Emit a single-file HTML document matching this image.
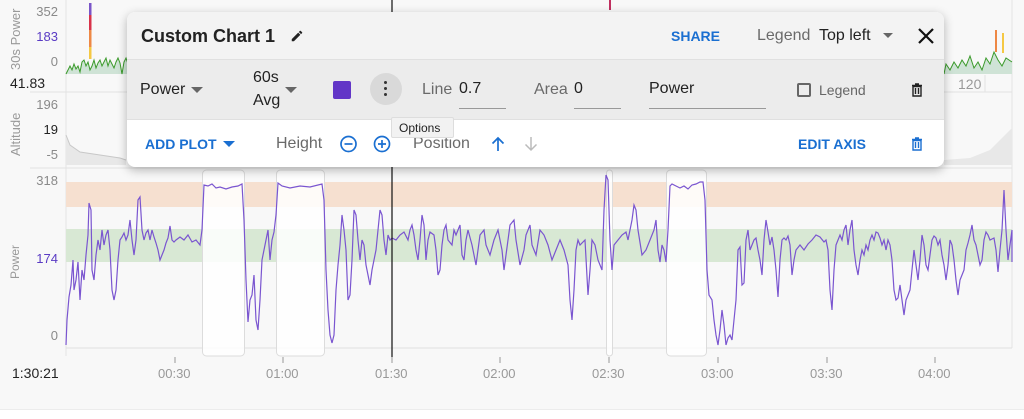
<!DOCTYPE html>
<html><head><meta charset="utf-8"><style>
*{box-sizing:border-box;margin:0;padding:0}
body{width:1024px;height:419px;overflow:hidden;background:#f8f8f8;font-family:"Liberation Sans",sans-serif;position:relative}
.a{position:absolute;white-space:nowrap}
.yl{color:#8a8a8a;font-size:13px;text-align:right;width:30px}
.dlg{position:absolute;left:127px;top:12px;width:817px;height:155px;border-radius:8px;box-shadow:0 3px 10px rgba(0,0,0,.28);overflow:hidden;background:#fff}
.blue{color:#1a6fd1;font-weight:bold;font-size:14px}
.g{color:#6a6a6a;font-size:16px}
.k{color:#222;font-size:16px}
.ul{position:absolute;height:1px;background:#999;top:96px}
</style></head><body>
<svg class="a" style="left:0;top:0" width="1024" height="419">
<line x1="30" y1="92" x2="1012" y2="92" stroke="#e2e2e2"/>
<line x1="30" y1="168" x2="1012" y2="168" stroke="#e2e2e2"/>
<line x1="66" y1="0" x2="66" y2="356" stroke="#e4e4e4"/>
<line x1="1012" y1="0" x2="1012" y2="348" stroke="#e4e4e4"/>
<line x1="66" y1="348" x2="1012" y2="348" stroke="#e0e0e0"/>
<path d="M66 74 L68 70 70 66 72 70 74 64 76 69 78 66 80 72 82 62 84 60 86 66 88 62 90 70 92 66 94 60 96 68 98 63 100 60 102 66 104 62 106 58 108 66 110 60 112 64 114 68 116 62 118 58 120 63 122 74 124 62 126 58 128 64 L128 74 Z" fill="#cfe3d6"/>
<path d="M66 74 L68 70 70 66 72 70 74 64 76 69 78 66 80 72 82 62 84 60 86 66 88 62 90 70 92 66 94 60 96 68 98 63 100 60 102 66 104 62 106 58 108 66 110 60 112 64 114 68 116 62 118 58 120 63 122 74 124 62 126 58 128 64" fill="none" stroke="#3a9a2a" stroke-width="1"/>
<rect x="89" y="3" width="2.5" height="12" fill="#7a55c8"/><rect x="89" y="15" width="2.5" height="15" fill="#d8334a"/><rect x="89" y="30" width="2.5" height="17" fill="#ee8845"/><rect x="89" y="47" width="2.5" height="12" fill="#f5c843"/>
<path d="M944 74 L946 64 950 70 954 62 958 68 962 60 966 66 970 56 974 68 978 62 982 70 986 58 990 64 994 52 998 60 1002 66 1006 58 1012 62 L1012 74 Z" fill="#cfe3d6"/>
<path d="M944 74 L946 64 950 70 954 62 958 68 962 60 966 66 970 56 974 68 978 62 982 70 986 58 990 64 994 52 998 60 1002 66 1006 58 1012 62" fill="none" stroke="#3a9a2a"/>
<rect x="995" y="30" width="2" height="22" fill="#ee8845"/><rect x="1002" y="33" width="2" height="20" fill="#f5c843"/>
<line x1="985" y1="75" x2="985" y2="92" stroke="#e2e2e2"/>
<rect x="609" y="0" width="2" height="10" fill="#c03060"/>
<path d="M66 135 L70 145 80 152 100 155 120 158 126 160 L126 165 66 165Z" fill="#e8e8e8"/>
<path d="M66 135 L70 145 80 152 100 155 120 158 126 160" fill="none" stroke="#c8c8c8"/>
<path d="M944 160 L970 158 990 150 1000 140 1012 128 L1012 165 944 165Z" fill="#e8e8e8"/>
<rect x="66" y="182" width="946" height="25" fill="#f6e0d0"/>
<rect x="66" y="229" width="946" height="33" fill="#d8e8d4"/>
<g fill="rgba(255,255,255,.85)" stroke="#dcdcdc">
<rect x="202.5" y="170" width="42" height="186" rx="4"/>
<rect x="276.5" y="170" width="48" height="186" rx="4"/>
<rect x="606.5" y="170" width="6" height="186" rx="3"/>
<rect x="666.5" y="170" width="40" height="186" rx="4"/>
</g>
<g stroke="#999"><line x1="175" y1="357" x2="175" y2="363"/><line x1="283" y1="357" x2="283" y2="363"/><line x1="392" y1="357" x2="392" y2="363"/><line x1="500" y1="357" x2="500" y2="363"/><line x1="609" y1="357" x2="609" y2="363"/><line x1="718" y1="357" x2="718" y2="363"/><line x1="827" y1="357" x2="827" y2="363"/><line x1="935" y1="357" x2="935" y2="363"/></g>
<polyline fill="none" stroke="#7a55d0" stroke-width="1.2" points="66,345 67,320 69,297 71,285 73,260 74,290 76,280 78,262 80,300 82,270 84,280 86,255 88,235 89,203 91,210 92,270 94,280 96,255 98,240 100,250 102,230 104,245 106,235 108,230 110,250 112,290 114,300 116,290 118,260 120,240 122,237 124,233 126,240 128,235 130,220 132,240 134,255 136,240 138,200 140,197 142,230 144,240 146,233 148,230 150,240 152,230 154,237 156,243 158,250 160,260 162,255 164,250 166,243 168,238 170,226 172,240 174,242 176,240 180,237 184,240 188,235 192,242 196,240 200,245 202,230 204,185 208,186 212,184 216,188 220,187 226,189 232,187 238,186 242,184 244,220 246,280 248,322 250,300 252,295 254,275 256,320 258,330 260,300 262,260 264,250 266,240 268,230 270,260 272,240 274,232 276,215 278,183 282,186 290,188 300,186 310,187 322,184 324,200 326,270 328,310 330,335 332,343 334,335 336,290 338,265 340,245 342,215 344,230 346,250 348,300 350,295 352,260 354,210 356,215 358,240 360,260 362,240 364,245 366,265 370,285 372,270 376,250 378,230 380,210 382,215 384,240 386,255 388,235 390,240 392,238 396,240 400,235 404,232 408,240 410,230 412,225 414,235 416,250 418,260 420,240 422,215 424,225 426,260 428,240 430,232 434,235 436,250 438,275 440,270 442,245 444,230 446,225 448,240 452,245 454,230 456,235 460,225 462,255 464,260 466,240 468,230 472,245 476,265 478,250 480,235 484,230 486,245 490,255 494,240 498,230 502,250 504,270 506,255 510,225 514,220 516,240 520,265 524,250 526,235 530,225 532,245 536,255 540,230 544,235 548,245 552,260 556,250 560,240 564,250 568,265 570,300 572,320 574,290 576,250 578,240 580,245 585,240 588,295 590,270 592,240 595,245 598,260 602,270 604,210 606,175 608,180 610,240 612,270 614,245 618,240 622,235 626,232 628,240 632,220 634,205 636,210 638,230 642,255 646,250 650,240 654,230 656,220 658,250 660,262 662,245 664,250 666,262 668,230 670,186 672,184 676,186 680,188 684,186 688,189 692,185 696,184 700,182 703,182 705,200 707,270 709,295 712,300 714,320 716,335 718,345 720,330 722,310 724,325 726,345 728,338 730,335 732,340 734,320 736,300 738,250 740,247 742,285 744,283 746,240 748,230 750,250 752,245 754,240 756,238 758,250 760,260 762,275 764,240 766,220 768,232 770,245 772,237 774,250 776,270 778,297 780,260 782,240 784,238 786,240 788,236 790,245 792,275 794,260 796,250 800,245 804,250 808,244 812,240 816,235 820,237 824,242 826,240 828,250 830,290 832,310 834,270 836,245 838,240 840,235 842,240 844,230 846,225 848,245 850,230 852,220 854,250 856,265 858,275 860,260 862,250 864,255 866,245 868,250 870,240 872,235 874,240 876,232 878,233 880,238 882,245 884,240 886,250 888,240 890,245 892,260 894,290 896,300 898,298 900,285 902,300 904,315 906,300 908,295 910,290 912,270 914,250 916,265 918,280 920,260 922,235 924,245 926,265 928,270 930,255 932,240 934,236 936,238 938,245 940,240 942,255 944,265 946,280 948,265 950,240 952,245 954,260 956,280 958,295 960,280 962,275 964,270 966,250 968,243 970,235 972,225 974,240 976,245 978,255 980,265 982,260 984,240 986,232 988,235 990,240 994,238 996,250 998,272 1000,250 1002,230 1004,190 1006,230 1008,260 1010,245 1012,230 1012,262"/>
<line x1="392" y1="0" x2="392" y2="357" stroke="#111" stroke-width="1.2"/>
<line x1="0" y1="410" x2="1024" y2="410" stroke="#e0e0e0"/>
</svg>
<div class="a" style="left:0;top:410px;width:1024px;height:9px;background:#fff"></div>
<div class="a" style="left:8px;top:70px;transform:rotate(-90deg);transform-origin:left top;color:#999;font-size:13px">30s Power</div>
<div class="a yl" style="left:28px;top:4px">352</div>
<div class="a yl" style="left:28px;top:29px;color:#5a3bc4">183</div>
<div class="a yl" style="left:28px;top:54px">0</div>
<div class="a" style="left:10px;top:75px;color:#222;font-size:14px">41.83</div>
<div class="a" style="left:8px;top:156px;transform:rotate(-90deg);transform-origin:left top;color:#999;font-size:13px">Altitude</div>
<div class="a yl" style="left:28px;top:97px">196</div>
<div class="a yl" style="left:28px;top:122px;color:#222">19</div>
<div class="a yl" style="left:28px;top:147px">-5</div>
<div class="a" style="left:8px;top:279px;transform:rotate(-90deg);transform-origin:left top;color:#999;font-size:12px">Power</div>
<div class="a yl" style="left:28px;top:173px">318</div>
<div class="a yl" style="left:28px;top:251px;color:#5a3bc4">174</div>
<div class="a yl" style="left:28px;top:328px">0</div>
<div class="a" style="left:12px;top:365px;color:#222;font-size:14px">1:30:21</div>
<div class="a" style="left:958px;top:76px;color:#999;font-size:14px">120</div>
<div class="a" style="color:#999;font-size:13px;top:366px;left:158px">00:30</div>
<div class="a" style="color:#999;font-size:13px;top:366px;left:266px">01:00</div>
<div class="a" style="color:#999;font-size:13px;top:366px;left:375px">01:30</div>
<div class="a" style="color:#999;font-size:13px;top:366px;left:483px">02:00</div>
<div class="a" style="color:#999;font-size:13px;top:366px;left:592px">02:30</div>
<div class="a" style="color:#999;font-size:13px;top:366px;left:701px">03:00</div>
<div class="a" style="color:#999;font-size:13px;top:366px;left:810px">03:30</div>
<div class="a" style="color:#999;font-size:13px;top:366px;left:918px">04:00</div>

<div class="dlg">
 <div class="a" style="left:0;top:0;width:817px;height:48px;background:#f3f3f3;border-bottom:1px solid #e0e0e0"></div>
 <div class="a" style="left:0;top:48px;width:817px;height:60px;background:#ececec;border-bottom:1px solid #e0e0e0"></div>
 <div class="a" style="left:14px;top:14px;font-size:18px;font-weight:bold;color:#222">Custom Chart 1</div>
 <svg class="a" style="left:163px;top:17px" width="14" height="14" viewBox="0 0 24 24"><path d="M3 17.25V21h3.75L17.81 9.94l-3.75-3.75L3 17.25zM20.71 7.04a1 1 0 000-1.41l-2.34-2.34a1 1 0 00-1.41 0l-1.83 1.83 3.75 3.75 1.83-1.83z" fill="#222"/></svg>
 <div class="a blue" style="left:544px;top:16px">SHARE</div>
 <div class="a g" style="left:630px;top:15px">Legend</div>
 <div class="a k" style="left:692px;top:15px">Top left</div>
 <div class="a" style="left:756px;top:21px;border:5px solid transparent;border-top:5px solid #666"></div>
 <svg class="a" style="left:790px;top:15px" width="18" height="18"><path d="M2 2L16 16M16 2L2 16" stroke="#111" stroke-width="2.2"/></svg>

 <div class="a k" style="left:13px;top:69px">Power</div>
 <div class="a" style="left:64px;top:75px;border:6px solid transparent;border-top:6px solid #666"></div>
 <div class="a k" style="left:126px;top:57px">60s</div>
 <div class="a k" style="left:126px;top:80px">Avg</div>
 <div class="a" style="left:158px;top:75px;border:6px solid transparent;border-top:6px solid #666"></div>
 <div class="a" style="left:206px;top:69px;width:18px;height:18px;background:#6236c7;border-radius:2px"></div>
 <div class="a" style="left:243px;top:61px;width:32px;height:32px;border-radius:50%;background:#d9d9d9"></div>
 <div class="a" style="left:257px;top:69px;width:3px;height:3px;border-radius:50%;background:#333;box-shadow:0 6px 0 #333,0 12px 0 #333"></div>
 <div class="a g" style="left:295px;top:69px">Line</div>
 <div class="a k" style="left:332px;top:68px">0.7</div><div class="ul" style="left:332px;width:47px"></div>
 <div class="a g" style="left:407px;top:69px">Area</div>
 <div class="a k" style="left:447px;top:68px">0</div><div class="ul" style="left:447px;width:47px"></div>
 <div class="a k" style="left:522px;top:68px">Power</div><div class="ul" style="left:522px;width:117px"></div>
 <div class="a" style="left:670px;top:71px;width:14px;height:14px;border:2px solid #666;border-radius:2px"></div>
 <div class="a" style="left:692px;top:70px;color:#666;font-size:14px">Legend</div>
 <svg class="a" style="left:784px;top:71px" width="12" height="14" viewBox="0 0 12 14"><path d="M1 2.5h10M4 1h4M2 3.5h8v9.5H2z M4.5 5v6M7.5 5v6" fill="none" stroke="#222" stroke-width="1.4"/></svg>

 <div class="a blue" style="left:18px;top:124px">ADD PLOT</div>
 <div class="a" style="left:96px;top:129px;border:6px solid transparent;border-top:6px solid #1a6fd1"></div>
 <div class="a g" style="left:149px;top:123px">Height</div>
 <svg class="a" style="left:212px;top:123px" width="58" height="18"><circle cx="9.5" cy="9" r="7.5" fill="none" stroke="#1a6fd1" stroke-width="1.7"/><path d="M5.5 9h8" stroke="#1a6fd1" stroke-width="1.7"/><circle cx="43" cy="9" r="7.5" fill="none" stroke="#1a6fd1" stroke-width="1.7"/><path d="M39 9h8M43 5v8" stroke="#1a6fd1" stroke-width="1.7"/></svg>
 <div class="a g" style="left:286px;top:123px">Position</div>
 <svg class="a" style="left:362px;top:123px" width="50" height="18"><path d="M9 16V3M3.5 8.5L9 3l5.5 5.5" fill="none" stroke="#1a6fd1" stroke-width="1.7"/><path d="M42 2v13M36.5 9.5L42 15l5.5-5.5" fill="none" stroke="#bbb" stroke-width="1.5"/></svg>
 <div class="a blue" style="left:671px;top:124px">EDIT AXIS</div>
 <svg class="a" style="left:784px;top:125px" width="12" height="14" viewBox="0 0 12 14"><path d="M1 2.5h10M4 1h4M2 3.5h8v9.5H2z M4.5 5v6M7.5 5v6" fill="none" stroke="#1a6fd1" stroke-width="1.4"/></svg>
</div>
<div class="a" style="left:391px;top:117px;width:63px;height:21px;background:#f2f2f2;border:1px solid #ddd;border-radius:2px;color:#222;font-size:12px;padding:3px 0 0 7px">Options</div>
</body></html>
